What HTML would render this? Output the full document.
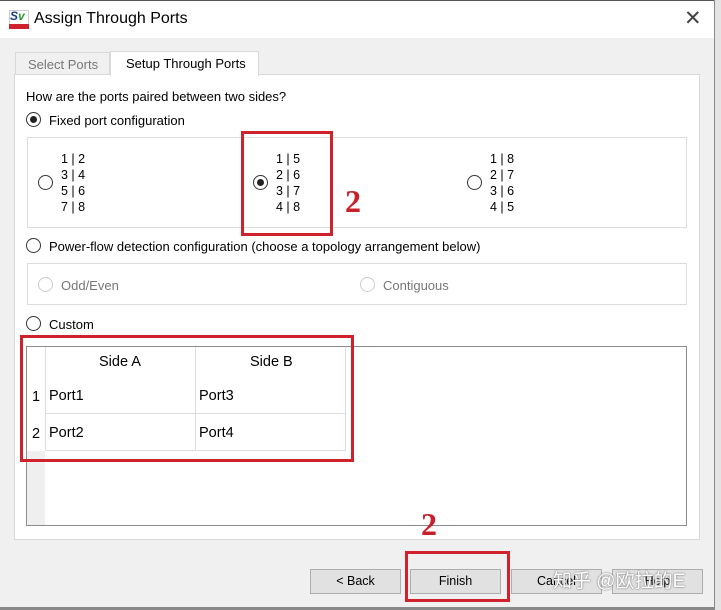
<!DOCTYPE html>
<html><head><meta charset="utf-8"><style>
*{margin:0;padding:0;box-sizing:border-box}
body{width:721px;height:610px;position:relative;overflow:hidden;background:#f0f0f0;font-family:"Liberation Sans","Noto Sans CJK SC",sans-serif;font-size:13px;color:#000}
.a{position:absolute}
.t{position:absolute;white-space:nowrap}
.r{position:absolute;width:15px;height:15px;border:1px solid #333;border-radius:50%;background:#fff}
.r.on::after{content:"";position:absolute;left:3px;top:3px;width:7px;height:7px;border-radius:50%;background:#222}
.r.dis{border-color:#ccc}
.box{position:absolute;border:1px solid #dcdcdc}
.red{position:absolute;border:3px solid #d0222c}
.btn{position:absolute;height:25px;width:91px;border:1px solid #adadad;background:#e1e1e1;text-align:center;line-height:23px;font-size:12.5px}
.lst{position:absolute;font-size:12.5px;line-height:16px;white-space:pre}
.two{position:absolute;color:#c8202a;font-family:"Liberation Serif",serif;font-size:32px;font-weight:bold}
</style></head><body>
<div class="a" style="left:0;top:0;width:714px;height:38px;background:#fff;border-top:1px solid #555"></div>
<div class="a" style="left:714px;top:0;width:7px;height:610px;background:#e4e4e4;border-left:1px solid #888"></div>
<div class="a" style="left:0;top:607px;width:714px;height:3px;background:#888"></div>
<div class="a" style="left:9px;top:10px;width:20px;height:19px;background:#fff;border:1px solid #ccc"></div>
<div class="t" style="left:10px;top:9px;font-size:12px;font-weight:bold;font-style:italic;color:#1a3c8a">S<span style="color:#2a9a2a">v</span></div>
<div class="a" style="left:9px;top:24px;width:20px;height:5px;background:#d0222c"></div>
<div class="t" style="left:34px;top:10px;font-size:16px">Assign Through Ports</div>
<div class="t" style="left:684px;top:6px;font-size:21px;font-weight:100;color:#444">✕</div>

<div class="a" style="left:15px;top:52px;width:95px;height:23px;background:#f0f0f0;border:1px solid #d9d9d9;border-bottom:none"></div>
<div class="t" style="left:28px;top:57px;color:#777">Select Ports</div>
<div class="a" style="left:14px;top:74px;width:686px;height:466px;background:#fff;border:1px solid #d9d9d9"></div>
<div class="a" style="left:110px;top:51px;width:149px;height:25px;background:#fff;border:1px solid #d9d9d9;border-bottom:none"></div>
<div class="t" style="left:126px;top:56px">Setup Through Ports</div>

<div class="t" style="left:26px;top:89px">How are the ports paired between two sides?</div>
<div class="r on" style="left:26px;top:112px"></div><div class="t" style="left:49px;top:113px">Fixed port configuration</div>
<div class="box" style="left:27px;top:137px;width:660px;height:91px"></div>
<div class="r" style="left:38px;top:175px"></div>
<div class="lst" style="left:61px;top:151px">1 | 2
3 | 4
5 | 6
7 | 8</div>
<div class="r on" style="left:253px;top:175px"></div>
<div class="lst" style="left:276px;top:151px">1 | 5
2 | 6
3 | 7
4 | 8</div>
<div class="r" style="left:467px;top:175px"></div>
<div class="lst" style="left:490px;top:151px">1 | 8
2 | 7
3 | 6
4 | 5</div>
<div class="red" style="left:241px;top:131px;width:92px;height:105px"></div>
<div class="two" style="left:345px;top:183px">2</div>

<div class="r" style="left:26px;top:238px"></div><div class="t" style="left:49px;top:239px">Power-flow detection configuration (choose a topology arrangement below)</div>
<div class="box" style="left:27px;top:263px;width:660px;height:42px"></div>
<div class="r dis" style="left:38px;top:277px"></div><div class="t" style="left:61px;top:278px;color:#777">Odd/Even</div>
<div class="r dis" style="left:360px;top:277px"></div><div class="t" style="left:383px;top:278px;color:#777">Contiguous</div>
<div class="r" style="left:26px;top:316px"></div><div class="t" style="left:49px;top:317px">Custom</div>

<div class="a" style="left:26px;top:346px;width:661px;height:180px;border:1px solid #8c8c8c;background:#fff"></div>
<div class="a" style="left:27px;top:451px;width:18px;height:74px;background:#efefef"></div>
<div class="a" style="left:45px;top:347px;width:1px;height:104px;background:#ddd"></div>
<div class="a" style="left:195px;top:347px;width:1px;height:104px;background:#ddd"></div>
<div class="a" style="left:345px;top:347px;width:1px;height:104px;background:#ddd"></div>
<div class="a" style="left:45px;top:413px;width:301px;height:1px;background:#ddd"></div>
<div class="a" style="left:45px;top:450px;width:301px;height:1px;background:#ddd"></div>
<div class="t" style="left:99px;top:354px;font-size:14.5px">Side A</div>
<div class="t" style="left:250px;top:354px;font-size:14.5px">Side B</div>
<div class="t" style="left:32px;top:389px;font-size:14.5px">1</div>
<div class="t" style="left:49px;top:388px;font-size:14.5px">Port1</div>
<div class="t" style="left:199px;top:388px;font-size:14.5px">Port3</div>
<div class="t" style="left:32px;top:426px;font-size:14.5px">2</div>
<div class="t" style="left:49px;top:425px;font-size:14.5px">Port2</div>
<div class="t" style="left:199px;top:425px;font-size:14.5px">Port4</div>
<div class="red" style="left:20px;top:335px;width:334px;height:127px"></div>

<div class="two" style="left:421px;top:506px">2</div>
<div class="btn" style="left:310px;top:569px">&lt; Back</div>
<div class="btn" style="left:410px;top:569px">Finish</div>
<div class="btn" style="left:511px;top:569px">Cancel</div>
<div class="btn" style="left:612px;top:569px">Help</div>
<div class="red" style="left:405px;top:551px;width:105px;height:51px"></div>
<div class="t" style="left:553px;top:566px;font-size:19px;color:#fff;text-shadow:0 0 2px #888,0 0 1px #666">知乎 @欧拉的E</div>
</body></html>
